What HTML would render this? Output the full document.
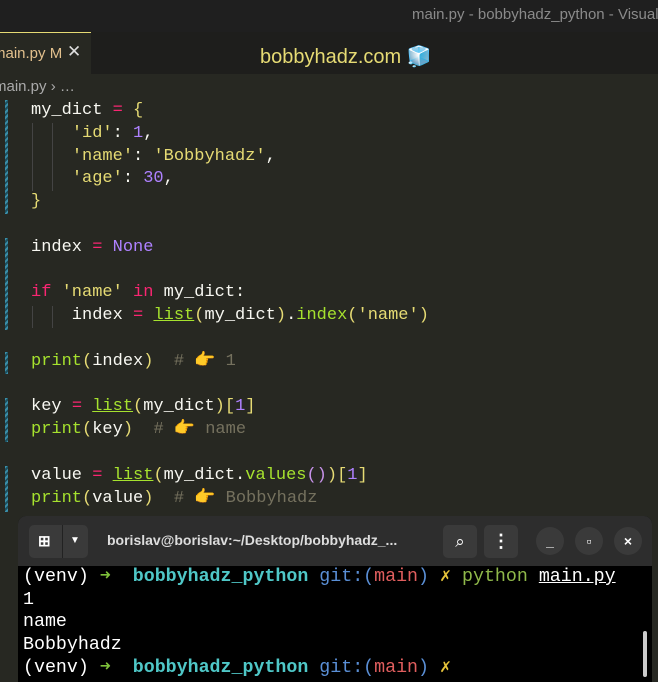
<!DOCTYPE html>
<html><head><style>
body{margin:0;width:658px;height:682px;overflow:hidden;background:#272822;position:relative;font-family:"Liberation Sans",sans-serif}
.title{position:absolute;left:0;top:0;width:658px;height:32px;background:#1f1f1f;color:#8a8a8a;font-size:15px;overflow:hidden}
.title span{position:absolute;left:412px;top:6px;white-space:nowrap}
.tabs{position:absolute;left:0;top:32px;width:658px;height:42px;background:#1e1e1c}
.tab{position:absolute;left:0;top:0;width:91px;height:41px;background:#272822;border-top:1px solid #e6db74;color:#e2c08d;font-size:15px;overflow:hidden}
.tab span{position:absolute;left:-7px;top:12px;white-space:nowrap}
.tab b{position:absolute;left:67px;top:9px;color:#ddd;font-weight:normal;font-size:17px}
.brand{position:absolute;left:260px;top:44px;color:#e6db74;font-size:20px}
.crumb{position:absolute;left:-6px;top:78px;color:#aaa;font-size:15px}
.code{position:absolute;left:31px;top:100px;font-family:"Liberation Mono",monospace;font-size:17px;line-height:22.8px;color:#f8f8f2;white-space:pre}
.k{color:#f92672}.s{color:#e6db74}.n{color:#ae81ff}.f{color:#a6e22e}.c{color:#75715e}.y{color:#e6db74}.p{color:#c792ea}
.bar{position:absolute;left:5px;width:3px;background:repeating-linear-gradient(135deg,#3a8ea8 0 2px,#1d4f5e 2px 4px)}
.guide{position:absolute;width:1px;background:#444}
.term{position:absolute;left:18px;top:516px;width:634px;height:166px;background:#000;border-radius:8px 8px 0 0;overflow:hidden}
.th{position:absolute;left:0;top:0;width:634px;height:50px;background:#2d2d2d}
.btn{position:absolute;background:#3a3a3a;border-radius:5px}
.circ{position:absolute;width:28px;height:28px;border-radius:14px;background:#3a3a3a;color:#fff;font-size:14px;text-align:center;line-height:28px;font-weight:bold}
.tt{position:absolute;left:89px;top:16px;color:#ddd;font-size:14px;font-weight:bold}
.out{position:absolute;left:5px;top:50px;font-family:"Liberation Mono",monospace;font-size:18.3px;line-height:22.7px;color:#fff;white-space:pre}
.g{color:#7ec13a}.cy{color:#4fc7c7;font-weight:bold}.bl{color:#5a8fd6}.r{color:#e05e5e}.ye{color:#e6c33a}.gr{color:#8fb84a}
</style></head><body>
<div class="title"><span>main.py - bobbyhadz_python - Visual Studio Code</span></div>
<div class="tabs"><div class="tab"><span>main.py M</span><b>✕</b></div></div>
<div class="brand">bobbyhadz.com 🧊</div>
<div class="crumb">main.py › …</div>
<div class="bar" style="top:100px;height:114px"></div>
<div class="bar" style="top:238px;height:92px"></div>
<div class="bar" style="top:352px;height:22px"></div>
<div class="bar" style="top:398px;height:44px"></div>
<div class="bar" style="top:466px;height:46px"></div>
<div class="guide" style="left:32px;top:123px;height:68px"></div>
<div class="guide" style="left:52px;top:123px;height:68px"></div>
<div class="guide" style="left:32px;top:306px;height:22px"></div>
<div class="guide" style="left:52px;top:306px;height:22px"></div>
<div class="code">my_dict <span class="k">=</span> <span class="y">{</span>
    <span class="s">'id'</span>: <span class="n">1</span>,
    <span class="s">'name'</span>: <span class="s">'Bobbyhadz'</span>,
    <span class="s">'age'</span>: <span class="n">30</span>,
<span class="y">}</span>

index <span class="k">=</span> <span class="n">None</span>

<span class="k">if</span> <span class="s">'name'</span> <span class="k">in</span> my_dict:
    index <span class="k">=</span> <span class="f" style="text-decoration:underline">list</span><span class="y">(</span>my_dict<span class="y">)</span>.<span class="f">index</span><span class="y">(</span><span class="s">'name'</span><span class="y">)</span>

<span class="f">print</span><span class="y">(</span>index<span class="y">)</span>  <span class="c"># 👉 1</span>

key <span class="k">=</span> <span class="f" style="text-decoration:underline">list</span><span class="y">(</span>my_dict<span class="y">)[</span><span class="n">1</span><span class="y">]</span>
<span class="f">print</span><span class="y">(</span>key<span class="y">)</span>  <span class="c"># 👉 name</span>

value <span class="k">=</span> <span class="f" style="text-decoration:underline">list</span><span class="y">(</span>my_dict.<span class="f">values</span><span class="p">()</span><span class="y">)[</span><span class="n">1</span><span class="y">]</span>
<span class="f">print</span><span class="y">(</span>value<span class="y">)</span>  <span class="c"># 👉 Bobbyhadz</span></div>
<div class="term">
<div class="th">
<div class="btn" style="left:11px;top:9px;width:59px;height:33px"></div>
<div style="position:absolute;left:44px;top:9px;width:1px;height:33px;background:#222"></div>
<div style="position:absolute;left:20px;top:16px;color:#fff;font-size:15px;font-weight:bold">⊞</div>
<div style="position:absolute;left:52px;top:19px;color:#fff;font-size:10px">▼</div>
<div class="tt">borislav@borislav:~/Desktop/bobbyhadz_...</div>
<div class="btn" style="left:425px;top:9px;width:34px;height:33px;color:#fff;text-align:center;line-height:33px;font-size:17px">⌕</div>
<div class="btn" style="left:466px;top:9px;width:34px;height:33px;color:#fff;text-align:center;line-height:33px;font-size:18px;font-weight:bold">⋮</div>
<div class="circ" style="left:518px;top:11px">_</div>
<div class="circ" style="left:557px;top:11px">▫</div>
<div class="circ" style="left:596px;top:11px">×</div>
</div>
<div class="out">(venv) <span class="g">➜</span>  <span class="cy">bobbyhadz_python</span> <span class="bl">git:(</span><span class="r">main</span><span class="bl">)</span> <span class="ye">✗</span> <span class="gr">python</span> <span style="text-decoration:underline">main.py</span>
1
name
Bobbyhadz
(venv) <span class="g">➜</span>  <span class="cy">bobbyhadz_python</span> <span class="bl">git:(</span><span class="r">main</span><span class="bl">)</span> <span class="ye">✗</span></div>
<div style="position:absolute;left:625px;top:115px;width:4px;height:46px;background:#ccc;border-radius:2px"></div>
</div>
</body></html>
